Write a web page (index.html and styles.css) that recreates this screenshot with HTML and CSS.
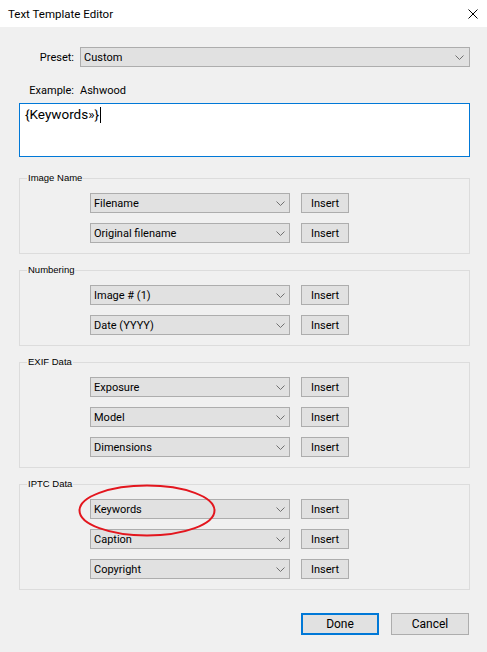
FILE: index.html
```html
<!DOCTYPE html>
<html lang="en">
<head>
<meta charset="utf-8">
<title>Text Template Editor</title>
<link rel="stylesheet" href="styles.css">
</head>
<body>
<div class="window">
  <div class="titlebar">
    <span class="title">Text Template Editor</span>
    <svg class="close" width="10" height="10" viewBox="0 0 10 10"><path d="M0.5 0.5 L9.5 9.5 M9.5 0.5 L0.5 9.5" stroke="#000" stroke-width="1" fill="none"/></svg>
  </div>
  <div class="content">
    <div class="form-row preset-row">
      <span class="lbl">Preset:</span>
      <div class="select">
        <span>Custom</span>
        <svg class="chev" width="9" height="5" viewBox="0 0 9 5"><path d="M0.5 0.5 L4.5 4.5 L8.5 0.5" stroke="#707070" stroke-width="1" fill="none"/></svg>
      </div>
    </div>
    <div class="form-row example-row">
      <span class="lbl">Example:</span>
      <span>Ashwood</span>
    </div>
    <div class="editor"><span>{Keywords»}</span><span class="caret"></span></div>

    <fieldset class="group first">
      <legend>Image Name</legend>
      <div class="rows">
        <div class="row"><div class="select small"><span>Filename</span><svg class="chev" width="9" height="5" viewBox="0 0 9 5"><path d="M0.5 0.5 L4.5 4.5 L8.5 0.5" stroke="#707070" stroke-width="1" fill="none"/></svg></div><button class="btn insert">Insert</button></div>
        <div class="row"><div class="select small"><span>Original filename</span><svg class="chev" width="9" height="5" viewBox="0 0 9 5"><path d="M0.5 0.5 L4.5 4.5 L8.5 0.5" stroke="#707070" stroke-width="1" fill="none"/></svg></div><button class="btn insert">Insert</button></div>
      </div>
    </fieldset>

    <fieldset class="group">
      <legend>Numbering</legend>
      <div class="rows">
        <div class="row"><div class="select small"><span>Image # (1)</span><svg class="chev" width="9" height="5" viewBox="0 0 9 5"><path d="M0.5 0.5 L4.5 4.5 L8.5 0.5" stroke="#707070" stroke-width="1" fill="none"/></svg></div><button class="btn insert">Insert</button></div>
        <div class="row"><div class="select small"><span>Date (YYYY)</span><svg class="chev" width="9" height="5" viewBox="0 0 9 5"><path d="M0.5 0.5 L4.5 4.5 L8.5 0.5" stroke="#707070" stroke-width="1" fill="none"/></svg></div><button class="btn insert">Insert</button></div>
      </div>
    </fieldset>

    <fieldset class="group">
      <legend>EXIF Data</legend>
      <div class="rows">
        <div class="row"><div class="select small"><span>Exposure</span><svg class="chev" width="9" height="5" viewBox="0 0 9 5"><path d="M0.5 0.5 L4.5 4.5 L8.5 0.5" stroke="#707070" stroke-width="1" fill="none"/></svg></div><button class="btn insert">Insert</button></div>
        <div class="row"><div class="select small"><span>Model</span><svg class="chev" width="9" height="5" viewBox="0 0 9 5"><path d="M0.5 0.5 L4.5 4.5 L8.5 0.5" stroke="#707070" stroke-width="1" fill="none"/></svg></div><button class="btn insert">Insert</button></div>
        <div class="row"><div class="select small"><span>Dimensions</span><svg class="chev" width="9" height="5" viewBox="0 0 9 5"><path d="M0.5 0.5 L4.5 4.5 L8.5 0.5" stroke="#707070" stroke-width="1" fill="none"/></svg></div><button class="btn insert">Insert</button></div>
      </div>
    </fieldset>

    <fieldset class="group">
      <legend>IPTC Data</legend>
      <div class="rows">
        <div class="row"><div class="select small"><span>Keywords</span><svg class="chev" width="9" height="5" viewBox="0 0 9 5"><path d="M0.5 0.5 L4.5 4.5 L8.5 0.5" stroke="#707070" stroke-width="1" fill="none"/></svg></div><button class="btn insert">Insert</button></div>
        <div class="row"><div class="select small"><span>Caption</span><svg class="chev" width="9" height="5" viewBox="0 0 9 5"><path d="M0.5 0.5 L4.5 4.5 L8.5 0.5" stroke="#707070" stroke-width="1" fill="none"/></svg></div><button class="btn insert">Insert</button></div>
        <div class="row"><div class="select small"><span>Copyright</span><svg class="chev" width="9" height="5" viewBox="0 0 9 5"><path d="M0.5 0.5 L4.5 4.5 L8.5 0.5" stroke="#707070" stroke-width="1" fill="none"/></svg></div><button class="btn insert">Insert</button></div>
      </div>
    </fieldset>

    <div class="actions">
      <button class="btn action primary">Done</button>
      <button class="btn action">Cancel</button>
    </div>
  </div>
  <svg class="annotation" width="138" height="53" viewBox="0 0 138 53"><ellipse cx="69" cy="26.5" rx="67.5" ry="25" fill="none" stroke="#e3161e" stroke-width="2"/></svg>
</div>
</body>
</html>
```
FILE: styles.css
```css
* { box-sizing: border-box; }
html, body { margin: 0; padding: 0; }
body {
  width: 487px;
  height: 652px;
  background: #f0f0f0;
  font-family: Roboto, "Liberation Sans", Arial, sans-serif;
  font-size: 11px;
  color: #000;
  overflow: hidden;
}
.window {
  position: relative;
  width: 487px;
  height: 652px;
  background: #f0f0f0;
}
.titlebar {
  height: 27px;
  background: #fff;
  display: flex;
  align-items: center;
  justify-content: space-between;
  padding: 0 9px 0 8px;
}
.title { font-size: 11.5px; }
.close { display: block; }
.content {
  padding: 0 17px 0 19px;
}
.form-row {
  display: grid;
  grid-template-columns: 55px 1fr;
  column-gap: 6px;
  align-items: center;
}
.lbl { text-align: right; }
.preset-row { margin-top: 20px; }
.example-row { margin-top: 16px; line-height: 16px; }
.select {
  height: 20px;
  background: #e1e1e1;
  border: 1px solid #adadad;
  display: flex;
  align-items: center;
  justify-content: space-between;
  padding: 0 5px 0 3px;
}
.select.small { width: 200px; padding-right: 4px; }
.chev { display: block; }
.editor {
  margin-top: 4px;
  height: 54px;
  background: #fff;
  border: 1px solid #0078d7;
  padding: 2px 5px;
  display: flex;
  align-items: flex-start;
  font-size: 13.5px;
  line-height: 17px;
}
.caret {
  display: inline-block;
  width: 1px;
  height: 16px;
  background: #000;
  margin-left: 1px;
  margin-top: 1px;
}
.group {
  margin: 10px 0 0 0;
  border: 1px solid #dcdcdc;
  padding: 9px 0 10px 7px;
  min-width: 0;
}
.group.first { margin-top: 15px; }
.group legend {
  font-family: "Liberation Sans", Arial, sans-serif;
  font-size: 9.5px;
  line-height: 12px;
  padding: 0 1px;
  color: #000;
}
.rows {
  display: flex;
  flex-direction: column;
  gap: 10px;
  margin-left: 63px;
}
.row {
  display: flex;
  gap: 11px;
  align-items: center;
  height: 20px;
}
.btn {
  font-family: inherit;
  font-size: 11px;
  color: #000;
  background: #e1e1e1;
  border: 1px solid #adadad;
  padding: 0;
  margin: 0;
  border-radius: 0;
}
.insert { width: 48px; height: 20px; }
.actions {
  display: flex;
  justify-content: flex-end;
  gap: 12px;
  margin-top: 23px;
  padding-right: 1px;
}
.action { width: 78px; height: 22px; font-size: 12px; }
.primary { border: 2px solid #0078d7; }
.annotation {
  position: absolute;
  left: 78px;
  top: 484px;
}
```
